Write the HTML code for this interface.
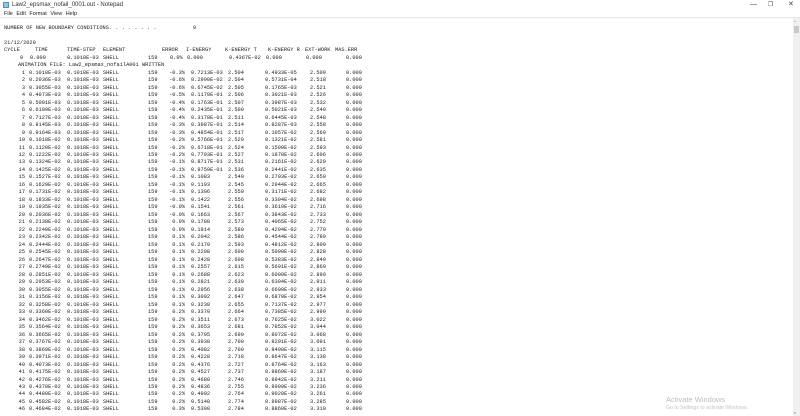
<!DOCTYPE html><html><head><meta charset="utf-8"><style>
*{margin:0;padding:0}
body{width:800px;height:416px;background:#fff;position:relative;overflow:hidden;font-family:"Liberation Sans",sans-serif}
.t{position:absolute;left:12px;top:1px;font-size:6px;color:#333;line-height:8px}
.ic{position:absolute;left:3px;top:2px;width:6px;height:6px;background:#8cc4e8;border:1px solid #5a8fb5;box-sizing:border-box}
.m{position:absolute;left:4px;top:10px;font-size:5.5px;color:#222;line-height:8px;word-spacing:2px}
.ctl{position:absolute;top:1px;font-size:7px;color:#444;line-height:8px}
.sep{position:absolute;left:0;top:17px;width:800px;height:1px;background:#e6e6e6}
.sb{position:absolute;left:793px;top:18px;width:7px;height:398px;background:#f0f0f0}
.th{position:absolute;left:794px;top:26px;width:5px;height:7px;background:#c8c8c8}
.ar{position:absolute;left:794px;font-size:4px;color:#666}
#txt{position:absolute;left:0;top:24.75px;width:790px;font-family:"Liberation Mono",monospace;font-size:5.3px;color:#222}
#txt div{position:relative;height:7.49px;line-height:7.49px;white-space:pre}
#txt span{position:absolute;top:0}
.r span:nth-child(1){right:calc(100% - 25px)}
.r span:nth-child(2){left:29px}
.r span:nth-child(3){left:67px}
.r span:nth-child(4){left:103px}
.r span:nth-child(5){left:148px}
.r span:nth-child(6){right:calc(100% - 185px)}
.r span:nth-child(7){left:191px}
.r span:nth-child(8){left:228px}
.r span:nth-child(9){left:265px}
.r span:nth-child(10){left:310px}
.r span:nth-child(11){left:346px}
.aw{position:absolute;left:666px;top:395px;font-size:7.5px;color:#bdbdbd}
.aw2{position:absolute;left:666px;top:405px;font-size:5.2px;color:#c4c4c4}
</style></head><body>
<div class="ic"></div><div class="t">Law2_epsmax_nofail_0001.out - Notepad</div>
<div class="m">File Edit Format View Help</div>
<div class="ctl" style="left:750px">—</div><div class="ctl" style="left:768px;font-size:6px">❐</div><div class="ctl" style="left:788px">✕</div>
<div class="sep"></div>
<div class="sb"></div><div class="th"></div><div class="ar" style="top:19px">^</div><div class="ar" style="top:410px">v</div>
<div id="txt">
<div><span style="left:4px">NUMBER OF NEW BOUNDARY CONDITIONS. . . . . . . .</span><span style="left:193px">0</span></div>
<div></div>
<div><span style="left:4px">21/12/2020</span></div>
<div><span style="left:4px">CYCLE</span><span style="left:35px">TIME</span><span style="left:67px">TIME-STEP</span><span style="left:103px">ELEMENT</span><span style="left:162px">ERROR</span><span style="left:186px">I-ENERGY</span><span style="left:225px">K-ENERGY T</span><span style="left:268px">K-ENERGY R</span><span style="left:305px">EXT-WORK</span><span style="left:335px">MAS.ERR</span></div>
<div><span style="left:20px">0</span><span style="left:30px">0.000</span><span style="left:67px">0.1018E-03</span><span style="left:103px">SHELL</span><span style="left:148px">159</span><span style="left:170px">0.0%</span><span style="left:187px">0.000</span><span style="left:229px">0.4367E-02</span><span style="left:266px">0.000</span><span style="left:306px">0.000</span><span style="left:346px">0.000</span></div>
<div><span style="left:18px">ANIMATION FILE: Law2_epsmax_nofailA001 WRITTEN</span></div>
<div class="r"><span>1</span><span>0.1018E-03</span><span>0.1018E-03</span><span>SHELL</span><span>159</span><span>-0.3%</span><span>0.7213E-03</span><span>2.504</span><span>0.4933E-05</span><span>2.509</span><span>0.000</span></div>
<div class="r"><span>2</span><span>0.2036E-03</span><span>0.1018E-03</span><span>SHELL</span><span>159</span><span>-0.6%</span><span>0.2990E-02</span><span>2.504</span><span>0.5731E-04</span><span>2.518</span><span>0.000</span></div>
<div class="r"><span>3</span><span>0.3055E-03</span><span>0.1018E-03</span><span>SHELL</span><span>159</span><span>-0.6%</span><span>0.6745E-02</span><span>2.505</span><span>0.1765E-03</span><span>2.521</span><span>0.000</span></div>
<div class="r"><span>4</span><span>0.4073E-03</span><span>0.1018E-03</span><span>SHELL</span><span>159</span><span>-0.5%</span><span>0.1170E-01</span><span>2.506</span><span>0.3021E-03</span><span>2.526</span><span>0.000</span></div>
<div class="r"><span>5</span><span>0.5091E-03</span><span>0.1018E-03</span><span>SHELL</span><span>159</span><span>-0.4%</span><span>0.1763E-01</span><span>2.507</span><span>0.3987E-03</span><span>2.532</span><span>0.000</span></div>
<div class="r"><span>6</span><span>0.6109E-03</span><span>0.1018E-03</span><span>SHELL</span><span>159</span><span>-0.4%</span><span>0.2435E-01</span><span>2.509</span><span>0.5021E-03</span><span>2.540</span><span>0.000</span></div>
<div class="r"><span>7</span><span>0.7127E-03</span><span>0.1018E-03</span><span>SHELL</span><span>159</span><span>-0.4%</span><span>0.3178E-01</span><span>2.511</span><span>0.6445E-03</span><span>2.548</span><span>0.000</span></div>
<div class="r"><span>8</span><span>0.8145E-03</span><span>0.1018E-03</span><span>SHELL</span><span>159</span><span>-0.3%</span><span>0.3987E-01</span><span>2.514</span><span>0.8287E-03</span><span>2.558</span><span>0.000</span></div>
<div class="r"><span>9</span><span>0.9164E-03</span><span>0.1018E-03</span><span>SHELL</span><span>159</span><span>-0.3%</span><span>0.4854E-01</span><span>2.517</span><span>0.1057E-02</span><span>2.569</span><span>0.000</span></div>
<div class="r"><span>10</span><span>0.1018E-02</span><span>0.1018E-03</span><span>SHELL</span><span>159</span><span>-0.2%</span><span>0.5766E-01</span><span>2.520</span><span>0.1321E-02</span><span>2.581</span><span>0.000</span></div>
<div class="r"><span>11</span><span>0.1120E-02</span><span>0.1018E-03</span><span>SHELL</span><span>159</span><span>-0.2%</span><span>0.6718E-01</span><span>2.524</span><span>0.1599E-02</span><span>2.593</span><span>0.000</span></div>
<div class="r"><span>12</span><span>0.1222E-02</span><span>0.1018E-03</span><span>SHELL</span><span>159</span><span>-0.2%</span><span>0.7703E-01</span><span>2.527</span><span>0.1878E-02</span><span>2.606</span><span>0.000</span></div>
<div class="r"><span>13</span><span>0.1324E-02</span><span>0.1018E-03</span><span>SHELL</span><span>159</span><span>-0.1%</span><span>0.8717E-01</span><span>2.531</span><span>0.2161E-02</span><span>2.620</span><span>0.000</span></div>
<div class="r"><span>14</span><span>0.1425E-02</span><span>0.1018E-03</span><span>SHELL</span><span>159</span><span>-0.1%</span><span>0.9759E-01</span><span>2.536</span><span>0.2441E-02</span><span>2.635</span><span>0.000</span></div>
<div class="r"><span>15</span><span>0.1527E-02</span><span>0.1018E-03</span><span>SHELL</span><span>159</span><span>-0.1%</span><span>0.1083</span><span>2.540</span><span>0.2703E-02</span><span>2.650</span><span>0.000</span></div>
<div class="r"><span>16</span><span>0.1629E-02</span><span>0.1018E-03</span><span>SHELL</span><span>159</span><span>-0.1%</span><span>0.1193</span><span>2.545</span><span>0.2944E-02</span><span>2.665</span><span>0.000</span></div>
<div class="r"><span>17</span><span>0.1731E-02</span><span>0.1018E-03</span><span>SHELL</span><span>159</span><span>-0.1%</span><span>0.1306</span><span>2.550</span><span>0.3171E-02</span><span>2.682</span><span>0.000</span></div>
<div class="r"><span>18</span><span>0.1833E-02</span><span>0.1018E-03</span><span>SHELL</span><span>159</span><span>-0.1%</span><span>0.1422</span><span>2.556</span><span>0.3394E-02</span><span>2.698</span><span>0.000</span></div>
<div class="r"><span>19</span><span>0.1935E-02</span><span>0.1018E-03</span><span>SHELL</span><span>159</span><span>-0.0%</span><span>0.1541</span><span>2.561</span><span>0.3619E-02</span><span>2.716</span><span>0.000</span></div>
<div class="r"><span>20</span><span>0.2036E-02</span><span>0.1018E-03</span><span>SHELL</span><span>159</span><span>-0.0%</span><span>0.1663</span><span>2.567</span><span>0.3843E-02</span><span>2.733</span><span>0.000</span></div>
<div class="r"><span>21</span><span>0.2138E-02</span><span>0.1018E-03</span><span>SHELL</span><span>159</span><span>0.0%</span><span>0.1788</span><span>2.573</span><span>0.4065E-02</span><span>2.752</span><span>0.000</span></div>
<div class="r"><span>22</span><span>0.2240E-02</span><span>0.1018E-03</span><span>SHELL</span><span>159</span><span>0.0%</span><span>0.1914</span><span>2.580</span><span>0.4294E-02</span><span>2.770</span><span>0.000</span></div>
<div class="r"><span>23</span><span>0.2342E-02</span><span>0.1018E-03</span><span>SHELL</span><span>159</span><span>0.1%</span><span>0.2042</span><span>2.586</span><span>0.4544E-02</span><span>2.789</span><span>0.000</span></div>
<div class="r"><span>24</span><span>0.2444E-02</span><span>0.1018E-03</span><span>SHELL</span><span>159</span><span>0.1%</span><span>0.2170</span><span>2.593</span><span>0.4812E-02</span><span>2.809</span><span>0.000</span></div>
<div class="r"><span>25</span><span>0.2545E-02</span><span>0.1018E-03</span><span>SHELL</span><span>159</span><span>0.1%</span><span>0.2298</span><span>2.600</span><span>0.5090E-02</span><span>2.828</span><span>0.000</span></div>
<div class="r"><span>26</span><span>0.2647E-02</span><span>0.1018E-03</span><span>SHELL</span><span>159</span><span>0.1%</span><span>0.2428</span><span>2.608</span><span>0.5383E-02</span><span>2.849</span><span>0.000</span></div>
<div class="r"><span>27</span><span>0.2749E-02</span><span>0.1018E-03</span><span>SHELL</span><span>159</span><span>0.1%</span><span>0.2557</span><span>2.615</span><span>0.5691E-02</span><span>2.869</span><span>0.000</span></div>
<div class="r"><span>28</span><span>0.2851E-02</span><span>0.1018E-03</span><span>SHELL</span><span>159</span><span>0.1%</span><span>0.2688</span><span>2.623</span><span>0.6000E-02</span><span>2.890</span><span>0.000</span></div>
<div class="r"><span>29</span><span>0.2953E-02</span><span>0.1018E-03</span><span>SHELL</span><span>159</span><span>0.1%</span><span>0.2821</span><span>2.630</span><span>0.6304E-02</span><span>2.911</span><span>0.000</span></div>
<div class="r"><span>30</span><span>0.3055E-02</span><span>0.1018E-03</span><span>SHELL</span><span>159</span><span>0.1%</span><span>0.2956</span><span>2.638</span><span>0.6600E-02</span><span>2.933</span><span>0.000</span></div>
<div class="r"><span>31</span><span>0.3156E-02</span><span>0.1018E-03</span><span>SHELL</span><span>159</span><span>0.1%</span><span>0.3092</span><span>2.647</span><span>0.6879E-02</span><span>2.954</span><span>0.000</span></div>
<div class="r"><span>32</span><span>0.3258E-02</span><span>0.1018E-03</span><span>SHELL</span><span>159</span><span>0.1%</span><span>0.3230</span><span>2.655</span><span>0.7137E-02</span><span>2.977</span><span>0.000</span></div>
<div class="r"><span>33</span><span>0.3360E-02</span><span>0.1018E-03</span><span>SHELL</span><span>159</span><span>0.2%</span><span>0.3370</span><span>2.664</span><span>0.7385E-02</span><span>2.999</span><span>0.000</span></div>
<div class="r"><span>34</span><span>0.3462E-02</span><span>0.1018E-03</span><span>SHELL</span><span>159</span><span>0.2%</span><span>0.3511</span><span>2.673</span><span>0.7625E-02</span><span>3.022</span><span>0.000</span></div>
<div class="r"><span>35</span><span>0.3564E-02</span><span>0.1018E-03</span><span>SHELL</span><span>159</span><span>0.2%</span><span>0.3653</span><span>2.681</span><span>0.7852E-02</span><span>3.044</span><span>0.000</span></div>
<div class="r"><span>36</span><span>0.3665E-02</span><span>0.1018E-03</span><span>SHELL</span><span>159</span><span>0.2%</span><span>0.3795</span><span>2.690</span><span>0.8072E-02</span><span>3.068</span><span>0.000</span></div>
<div class="r"><span>37</span><span>0.3767E-02</span><span>0.1018E-03</span><span>SHELL</span><span>159</span><span>0.2%</span><span>0.3938</span><span>2.700</span><span>0.8291E-02</span><span>3.091</span><span>0.000</span></div>
<div class="r"><span>38</span><span>0.3869E-02</span><span>0.1018E-03</span><span>SHELL</span><span>159</span><span>0.2%</span><span>0.4082</span><span>2.709</span><span>0.8490E-02</span><span>3.115</span><span>0.000</span></div>
<div class="r"><span>39</span><span>0.3971E-02</span><span>0.1018E-03</span><span>SHELL</span><span>159</span><span>0.2%</span><span>0.4228</span><span>2.718</span><span>0.8647E-02</span><span>3.138</span><span>0.000</span></div>
<div class="r"><span>40</span><span>0.4073E-02</span><span>0.1018E-03</span><span>SHELL</span><span>159</span><span>0.2%</span><span>0.4376</span><span>2.727</span><span>0.8764E-02</span><span>3.163</span><span>0.000</span></div>
<div class="r"><span>41</span><span>0.4175E-02</span><span>0.1018E-03</span><span>SHELL</span><span>159</span><span>0.2%</span><span>0.4527</span><span>2.737</span><span>0.8860E-02</span><span>3.187</span><span>0.000</span></div>
<div class="r"><span>42</span><span>0.4276E-02</span><span>0.1018E-03</span><span>SHELL</span><span>159</span><span>0.2%</span><span>0.4680</span><span>2.746</span><span>0.8942E-02</span><span>3.211</span><span>0.000</span></div>
<div class="r"><span>43</span><span>0.4378E-02</span><span>0.1018E-03</span><span>SHELL</span><span>159</span><span>0.2%</span><span>0.4836</span><span>2.755</span><span>0.8999E-02</span><span>3.236</span><span>0.000</span></div>
<div class="r"><span>44</span><span>0.4480E-02</span><span>0.1018E-03</span><span>SHELL</span><span>159</span><span>0.2%</span><span>0.4992</span><span>2.764</span><span>0.9020E-02</span><span>3.261</span><span>0.000</span></div>
<div class="r"><span>45</span><span>0.4582E-02</span><span>0.1018E-03</span><span>SHELL</span><span>159</span><span>0.2%</span><span>0.5148</span><span>2.774</span><span>0.8987E-02</span><span>3.285</span><span>0.000</span></div>
<div class="r"><span>46</span><span>0.4684E-02</span><span>0.1018E-03</span><span>SHELL</span><span>159</span><span>0.3%</span><span>0.5300</span><span>2.784</span><span>0.8860E-02</span><span>3.310</span><span>0.000</span></div>
</div>
<div class="aw">Activate Windows</div>
<div class="aw2">Go to Settings to activate Windows.</div>
</body></html>
